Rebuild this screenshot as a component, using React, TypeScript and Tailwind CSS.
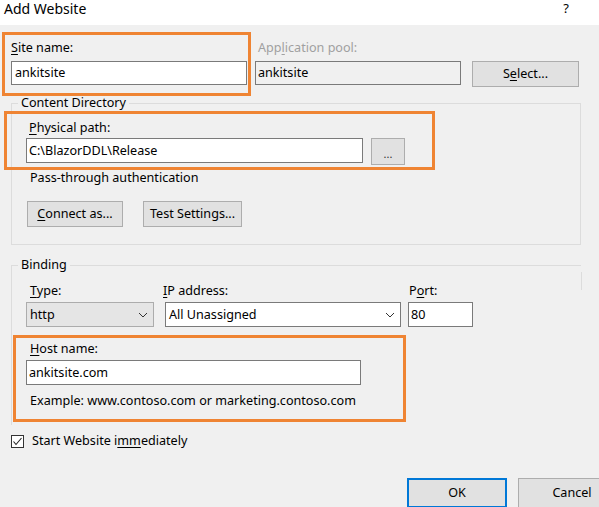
import React from 'react';

const U = ({ children }: { children: React.ReactNode }) => <span className="underline underline-offset-2">{children}</span>;

function Chevron() {
  return (
    <svg width="10" height="6" viewBox="0 0 10 6" className="shrink-0">
      <polyline points="1,1 5,5 9,1" fill="none" stroke="#333" strokeWidth="1" />
    </svg>
  );
}

export default function App() {
  return (
    <div className="w-[599px] h-[507px] overflow-hidden bg-[#f0f0f0] text-[12.6px] leading-4 text-black font-['Noto_Sans',sans-serif]">
      {/* title bar */}
      <div className="h-[25px] bg-white flex items-start justify-between pl-[4px] pr-[30px]">
        <span className="text-[14px] leading-4 pt-[1px]">Add Website</span>
        <span className="text-[13px] leading-4">?</span>
      </div>

      {/* site name / app pool */}
      <div className="flex items-start mt-[7px]">
        <div className="ml-[2px] w-[249px] h-[64px] border-[3px] border-[#ef8433] pl-[6px] pr-[1px] pt-[5px]">
          <div><U>S</U>ite name:</div>
          <div className="mt-[5px] h-[24px] bg-white border border-[#7a7a7a] px-[3px] flex items-center">ankitsite</div>
        </div>
        <div className="ml-[4px] pt-[8px]">
          <div className="pl-[3px] text-[#a0a0a0]">App<U>l</U>ication pool:</div>
          <div className="mt-[5px] w-[206px] h-[24px] border border-[#7a7a7a] px-[2px] flex items-center">ankitsite</div>
        </div>
        <button className="ml-[11px] mt-[29px] w-[107px] h-[26px] bg-[#e1e1e1] border border-[#adadad]">
          S<U>e</U>lect...
        </button>
      </div>

      {/* content directory */}
      <fieldset className="ml-[11px] -mt-[1px] w-[570px] border border-[#dcdcdc] pb-[17px]">
        <legend className="ml-[6px] px-[3px]">Content Directory</legend>
        <div className="-ml-[8px] w-[431px] h-[59px] border-[3px] border-[#ef8433] pl-[19px] pt-[6px]">
          <div className="pl-[3px]"><U>P</U>hysical path:</div>
          <div className="mt-[2px] flex items-start gap-[8px]">
            <div className="w-[337px] h-[25px] bg-white border border-[#7a7a7a] px-[2px] flex items-center">C:\BlazorDDL\Release</div>
            <button className="w-[34px] h-[27px] bg-[#e1e1e1] border border-[#adadad] text-[11px] leading-3 pt-[4px] text-[#333]">...</button>
          </div>
        </div>
        <div className="ml-[18px]">Pass-through authentication</div>
        <div className="ml-[15px] mt-[15px] flex gap-[20px]">
          <button className="w-[96px] h-[26px] bg-[#e1e1e1] border border-[#adadad]"><U>C</U>onnect as...</button>
          <button className="w-[99px] h-[26px] bg-[#e1e1e1] border border-[#adadad]">Test Settings...</button>
        </div>
      </fieldset>

      {/* binding */}
      <fieldset className="relative ml-[11px] mt-[12px] w-[570px] border-l border-t border-[#dcdcdc] pb-[3px]">
        <legend className="ml-[6px] px-[3px]">Binding</legend>
        <span className="absolute right-[-1px] top-[-1px] w-px h-[18px] bg-[#dcdcdc]" />
        <div className="mt-[10px] ml-[14px] flex items-start">
          <div className="w-[128px]">
            <div className="pl-[4px]"><U>T</U>ype:</div>
            <div className="mt-[3px] h-[25px] bg-[#e5e5e5] border border-[#acacac] pl-[3px] pr-[5px] flex items-center justify-between">
              <span>http</span>
              <Chevron />
            </div>
          </div>
          <div className="ml-[11px] w-[236px]">
            <div className="-ml-[2px]"><U>I</U>P address:</div>
            <div className="mt-[3px] h-[25px] bg-white border border-[#7a7a7a] pl-[3px] pr-[5px] flex items-center justify-between">
              <span>All Unassigned</span>
              <Chevron />
            </div>
          </div>
          <div className="ml-[7px] w-[65px]">
            <div className="pl-[1px]">P<U>o</U>rt:</div>
            <div className="mt-[3px] h-[25px] bg-white border border-[#7a7a7a] px-[2px] flex items-center">80</div>
          </div>
        </div>
        <div className="ml-[1px] mt-[8px] w-[393px] h-[87px] border-[3px] border-[#ef8433] pl-[10px] pt-[3px]">
          <div className="pl-[4px]"><U>H</U>ost name:</div>
          <div className="mt-[3px] w-[335px] h-[25px] bg-white border border-[#7a7a7a] px-[2px] flex items-center">ankitsite.com</div>
          <div className="mt-[8px] pl-[4px]">Example: www.contoso.com or marketing.contoso.com</div>
        </div>
      </fieldset>

      {/* start immediately */}
      <div className="mt-[8px] ml-[11px] flex items-center gap-[8px]">
        <span className="w-[13px] h-[13px] bg-white border border-[#333] flex items-center justify-center">
          <svg width="11" height="11" viewBox="0 0 11 11">
            <polyline points="1.5,5.5 4,8.5 9.5,2" fill="none" stroke="#222" strokeWidth="1.1" />
          </svg>
        </span>
        <span>Start Website i<U>mm</U>ediately</span>
      </div>

      {/* dialog buttons */}
      <div className="mt-[29px] pl-[407px] flex gap-[11px]">
        <button className="shrink-0 w-[100px] h-[30px] bg-[#e1e1e1] border-2 border-[#0078d7]">OK</button>
        <button className="shrink-0 w-[108px] h-[30px] bg-[#e1e1e1] border border-[#adadad]">Cancel</button>
      </div>
    </div>
  );
}
